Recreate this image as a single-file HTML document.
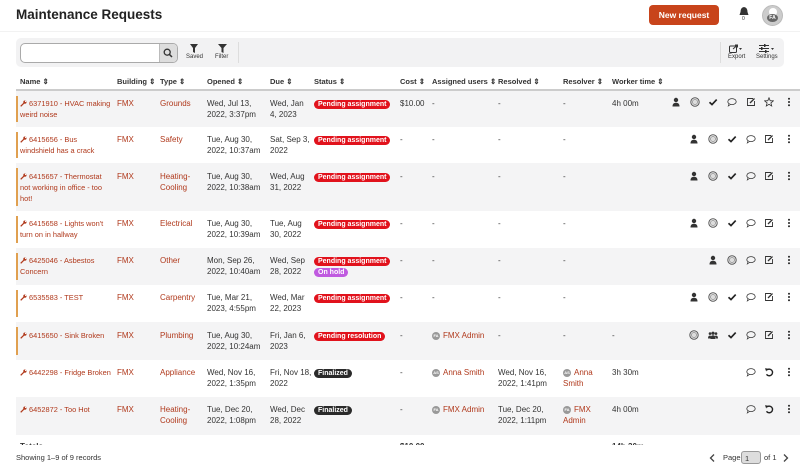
<!DOCTYPE html>
<html><head><meta charset="utf-8"><style>
*{margin:0;padding:0;box-sizing:border-box}
body{width:800px;height:468px;overflow:hidden;background:#fff;font-family:"Liberation Sans",Arial,sans-serif;color:#333;position:relative;font-size:8px}
.a{position:absolute}
.hdr{font-weight:bold;font-size:7.5px;color:#333;top:77px;position:absolute}
.row{position:absolute;left:16px;width:784px}
.g{background:#f4f4f5}
.bl::before{content:'';position:absolute;left:0;top:5px;bottom:5px;width:2px;background:#e0a050}
.c{position:absolute;line-height:11px;font-size:8px;color:#333;white-space:nowrap}
div.c[style*="left:20px"]{font-size:7.4px}
.lk{color:#b0391c}
.pill{display:inline-block;border-radius:6px;color:#fff;font-weight:bold;font-size:7px;line-height:9px;padding:0 4px;white-space:nowrap}
.red{background:#e1121c}
.blk{background:#2a2a2a}
.pur{background:#c05ae0}
.av{display:inline-block;width:8px;height:8px;border-radius:50%;background:#999;color:#fff;font-size:4px;line-height:8px;text-align:center;vertical-align:1px;margin-right:3px;font-weight:bold}
svg.i{position:absolute;width:10px;height:10px}
</style></head><body>
<svg width="0" height="0" style="position:absolute">
<defs>
<symbol id="per" viewBox="0 0 10 10"><circle cx="5" cy="3" r="2.2" fill="#333"/><path d="M1.5 9.5 Q1.5 5.8 5 5.8 Q8.5 5.8 8.5 9.5Z" fill="#333"/></symbol>
<symbol id="cir" viewBox="0 0 10 10"><circle cx="5" cy="5" r="4.2" fill="none" stroke="#555" stroke-width="1"/><circle cx="5" cy="5" r="2.6" fill="#ddd" stroke="#777" stroke-width=".6"/></symbol>
<symbol id="chk" viewBox="0 0 10 10"><path d="M1.5 5.2 L4 7.6 L8.7 2.6" fill="none" stroke="#222" stroke-width="1.7"/></symbol>
<symbol id="com" viewBox="0 0 10 10"><ellipse cx="5" cy="4.6" rx="4.2" ry="3" fill="none" stroke="#333" stroke-width=".8"/><path d="M2 7 L1.3 9 L3.6 7.4" fill="#fff" stroke="#333" stroke-width=".7"/></symbol>
<symbol id="edt" viewBox="0 0 10 10"><path d="M7 1.5 H1.5 V8.5 H8.5 V4" fill="none" stroke="#333" stroke-width=".9"/><path d="M4 6 L8.5 1.5" stroke="#333" stroke-width="1.3"/></symbol>
<symbol id="str" viewBox="0 0 10 10"><path d="M5 .8 L6.2 3.7 L9.3 3.9 L6.9 5.9 L7.7 9 L5 7.3 L2.3 9 L3.1 5.9 L.7 3.9 L3.8 3.7Z" fill="none" stroke="#333" stroke-width=".8"/></symbol>
<symbol id="dot" viewBox="0 0 10 10"><circle cx="5" cy="1.8" r="1" fill="#222"/><circle cx="5" cy="5" r="1" fill="#222"/><circle cx="5" cy="8.2" r="1" fill="#222"/></symbol>
<symbol id="grp" viewBox="0 0 10 10"><circle cx="5" cy="3.2" r="1.6" fill="#333"/><circle cx="2" cy="3.6" r="1.3" fill="#333"/><circle cx="8" cy="3.6" r="1.3" fill="#333"/><path d="M2.5 9 Q2.5 5.3 5 5.3 Q7.5 5.3 7.5 9Z M0 8.5 Q0 5.5 2 5.5 Q3 5.5 3 7 V8.5Z M10 8.5 Q10 5.5 8 5.5 Q7 5.5 7 7 V8.5Z" fill="#333"/></symbol>
<symbol id="und" viewBox="0 0 10 10"><path d="M3 3 A3.3 3.3 0 1 1 2.5 7.3" fill="none" stroke="#222" stroke-width="1.4"/><path d="M1 1.2 L3.8 1.6 L2.2 4.5Z" fill="#222"/></symbol>
<symbol id="wr" viewBox="0 0 10 10"><path d="M1 9 L5.5 4.5" stroke="#b0391c" stroke-width="1.8"/><circle cx="7" cy="3" r="2.3" fill="#b0391c"/><circle cx="8" cy="2" r="1" fill="#fff"/></symbol>
</defs></svg>

<div class="a" style="left:16px;top:7px;font-size:13.5px;font-weight:bold;color:#222">Maintenance Requests</div>
<div class="a" style="left:649px;top:5px;width:70px;height:20px;background:#c8441b;border-radius:4px;color:#fff;font-weight:bold;font-size:8.5px;line-height:20px;text-align:center">New request</div>
<svg class="a" style="left:739px;top:6px;width:10px;height:12px" viewBox="0 0 10 12"><path d="M5 1 Q8.5 1.5 8.5 6 L9.5 9 H.5 L1.5 6 Q1.5 1.5 5 1Z" fill="#333"/></svg>
<div class="a" style="left:742px;top:16px;font-size:5px">0</div>
<div class="a" style="left:762px;top:5px;width:21px;height:21px;border-radius:50%;background:#ccc;border:1px solid #bbb"><div style="position:absolute;left:6px;top:2px;width:8px;height:8px;border-radius:50%;background:#fff"></div><div style="position:absolute;left:4px;top:8px;width:11px;height:8px;border-radius:50%;background:#666;color:#fff;font-size:5px;font-weight:bold;text-align:center;line-height:8px">FA</div></div>
<div class="a" style="left:0;top:31px;width:800px;height:1px;background:#f2f2f2"></div>

<div class="a" style="left:16px;top:38px;width:768px;height:29px;background:#f2f2f3;border-radius:5px"></div>
<div class="a" style="left:20px;top:43px;width:158px;height:20px;background:#fff;border:1px solid #aaa;border-radius:5px;overflow:hidden"><div style="position:absolute;right:0;top:0;width:18px;height:20px;background:#ddd;border-left:1px solid #bbb"></div><svg style="position:absolute;right:4px;top:4px;width:10px;height:10px" viewBox="0 0 10 10"><circle cx="4.2" cy="4.2" r="3" fill="none" stroke="#333" stroke-width="1.3"/><path d="M6.3 6.3 L9 9" stroke="#333" stroke-width="1.5"/></svg></div>
<svg class="a" style="left:190px;top:44px;width:10px;height:9px" viewBox="0 0 10 9"><path d="M0 0 H8 L5 4 V9 L3 8 V4Z" fill="#333"/></svg>
<div class="a" style="left:186px;top:54px;font-size:6px">Saved</div>
<svg class="a" style="left:218px;top:44px;width:9px;height:9px" viewBox="0 0 9 9"><path d="M0 0 H9 L5.5 4 V9 L3.5 8 V4Z" fill="#333"/></svg>
<div class="a" style="left:215px;top:54px;font-size:6px">Filter</div>
<div class="a" style="left:238px;top:42px;width:1px;height:21px;background:#ddd"></div>
<div class="a" style="left:720px;top:42px;width:1px;height:21px;background:#ddd"></div>
<svg class="a" style="left:729px;top:44px;width:14px;height:9px" viewBox="0 0 14 9"><rect x=".5" y="2" width="7" height="6.5" rx="1" fill="none" stroke="#333"/><path d="M4 5 L8 1.5 M6 1 H8.5 V3.5" stroke="#333" fill="none"/><path d="M10 4 L13 4 L11.5 6Z" fill="#333"/></svg>
<div class="a" style="left:728px;top:54px;font-size:6px">Export</div>
<svg class="a" style="left:759px;top:44px;width:16px;height:9px" viewBox="0 0 16 9"><path d="M0 1.5 H10 M0 4.5 H10 M0 7.5 H10" stroke="#333"/><rect x="5" y="0" width="1.5" height="3" fill="#333"/><rect x="2" y="3" width="1.5" height="3" fill="#333"/><rect x="6" y="6" width="1.5" height="3" fill="#333"/><path d="M12 4 L15 4 L13.5 6Z" fill="#333"/></svg>
<div class="a" style="left:756px;top:54px;font-size:6px">Settings</div>

<div class="hdr" style="left:20px">Name ⇕</div>
<div class="hdr" style="left:117px">Building ⇕</div>
<div class="hdr" style="left:160px">Type ⇕</div>
<div class="hdr" style="left:207px">Opened ⇕</div>
<div class="hdr" style="left:270px">Due ⇕</div>
<div class="hdr" style="left:314px">Status ⇕</div>
<div class="hdr" style="left:400px">Cost ⇕</div>
<div class="hdr" style="left:432px">Assigned users ⇕</div>
<div class="hdr" style="left:498px">Resolved ⇕</div>
<div class="hdr" style="left:563px">Resolver ⇕</div>
<div class="hdr" style="left:612px">Worker time ⇕</div>
<div class="a" style="left:16px;top:89px;width:784px;height:2px;background:#ccc"></div>

<div class="row g bl" style="top:91px;height:36px"></div>
<div class="row bl" style="top:127px;height:36px"></div>
<div class="row g bl" style="top:163px;height:48px"></div>
<div class="row bl" style="top:211px;height:37px"></div>
<div class="row g bl" style="top:248px;height:37px"></div>
<div class="row bl" style="top:285px;height:37px"></div>
<div class="row g bl" style="top:322px;height:38px"></div>
<div class="row" style="top:360px;height:37px"></div>
<div class="row g" style="top:397px;height:38px"></div>

<div class="c lk" style="left:20px;top:98px"><svg style="width:7px;height:7px;vertical-align:-1px"><use href="#wr"/></svg> 6371910 - HVAC making<br>weird noise</div>
<div class="c lk" style="left:117px;top:98px">FMX</div>
<div class="c lk" style="left:160px;top:98px">Grounds</div>
<div class="c" style="left:207px;top:98px">Wed, Jul 13,<br>2022, 3:37pm</div>
<div class="c" style="left:270px;top:98px">Wed, Jan<br>4, 2023</div>
<div class="c" style="left:314px;top:98px"><span class="pill red">Pending assignment</span></div>
<div class="c" style="left:400px;top:98px">$10.00</div>
<div class="c" style="left:432px;top:98px">-</div>
<div class="c" style="left:498px;top:98px">-</div>
<div class="c" style="left:563px;top:98px">-</div>
<div class="c" style="left:612px;top:98px">4h 00m</div>

<div class="c lk" style="left:20px;top:134px"><svg style="width:7px;height:7px;vertical-align:-1px"><use href="#wr"/></svg> 6415656 - Bus<br>windshield has a crack</div>
<div class="c lk" style="left:117px;top:134px">FMX</div>
<div class="c lk" style="left:160px;top:134px">Safety</div>
<div class="c" style="left:207px;top:134px">Tue, Aug 30,<br>2022, 10:37am</div>
<div class="c" style="left:270px;top:134px">Sat, Sep 3,<br>2022</div>
<div class="c" style="left:314px;top:134px"><span class="pill red">Pending assignment</span></div>
<div class="c" style="left:400px;top:134px">-</div><div class="c" style="left:432px;top:134px">-</div><div class="c" style="left:498px;top:134px">-</div><div class="c" style="left:563px;top:134px">-</div>

<div class="c lk" style="left:20px;top:171px"><svg style="width:7px;height:7px;vertical-align:-1px"><use href="#wr"/></svg> 6415657 - Thermostat<br>not working in office - too<br>hot!</div>
<div class="c lk" style="left:117px;top:171px">FMX</div>
<div class="c lk" style="left:160px;top:171px">Heating-<br>Cooling</div>
<div class="c" style="left:207px;top:171px">Tue, Aug 30,<br>2022, 10:38am</div>
<div class="c" style="left:270px;top:171px">Wed, Aug<br>31, 2022</div>
<div class="c" style="left:314px;top:171px"><span class="pill red">Pending assignment</span></div>
<div class="c" style="left:400px;top:171px">-</div><div class="c" style="left:432px;top:171px">-</div><div class="c" style="left:498px;top:171px">-</div><div class="c" style="left:563px;top:171px">-</div>

<div class="c lk" style="left:20px;top:218px"><svg style="width:7px;height:7px;vertical-align:-1px"><use href="#wr"/></svg> 6415658 - Lights won't<br>turn on in hallway</div>
<div class="c lk" style="left:117px;top:218px">FMX</div>
<div class="c lk" style="left:160px;top:218px">Electrical</div>
<div class="c" style="left:207px;top:218px">Tue, Aug 30,<br>2022, 10:39am</div>
<div class="c" style="left:270px;top:218px">Tue, Aug<br>30, 2022</div>
<div class="c" style="left:314px;top:218px"><span class="pill red">Pending assignment</span></div>
<div class="c" style="left:400px;top:218px">-</div><div class="c" style="left:432px;top:218px">-</div><div class="c" style="left:498px;top:218px">-</div><div class="c" style="left:563px;top:218px">-</div>

<div class="c lk" style="left:20px;top:255px"><svg style="width:7px;height:7px;vertical-align:-1px"><use href="#wr"/></svg> 6425046 - Asbestos<br>Concern</div>
<div class="c lk" style="left:117px;top:255px">FMX</div>
<div class="c lk" style="left:160px;top:255px">Other</div>
<div class="c" style="left:207px;top:255px">Mon, Sep 26,<br>2022, 10:40am</div>
<div class="c" style="left:270px;top:255px">Wed, Sep<br>28, 2022</div>
<div class="c" style="left:314px;top:255px"><span class="pill red">Pending assignment</span><br><span class="pill pur" style="margin-top:1px">On hold</span></div>
<div class="c" style="left:400px;top:255px">-</div><div class="c" style="left:432px;top:255px">-</div><div class="c" style="left:498px;top:255px">-</div><div class="c" style="left:563px;top:255px">-</div>

<div class="c lk" style="left:20px;top:292px"><svg style="width:7px;height:7px;vertical-align:-1px"><use href="#wr"/></svg> 6535583 - TEST</div>
<div class="c lk" style="left:117px;top:292px">FMX</div>
<div class="c lk" style="left:160px;top:292px">Carpentry</div>
<div class="c" style="left:207px;top:292px">Tue, Mar 21,<br>2023, 4:55pm</div>
<div class="c" style="left:270px;top:292px">Wed, Mar<br>22, 2023</div>
<div class="c" style="left:314px;top:292px"><span class="pill red">Pending assignment</span></div>
<div class="c" style="left:400px;top:292px">-</div><div class="c" style="left:432px;top:292px">-</div><div class="c" style="left:498px;top:292px">-</div><div class="c" style="left:563px;top:292px">-</div>

<div class="c lk" style="left:20px;top:330px"><svg style="width:7px;height:7px;vertical-align:-1px"><use href="#wr"/></svg> 6415650 - Sink Broken</div>
<div class="c lk" style="left:117px;top:330px">FMX</div>
<div class="c lk" style="left:160px;top:330px">Plumbing</div>
<div class="c" style="left:207px;top:330px">Tue, Aug 30,<br>2022, 10:24am</div>
<div class="c" style="left:270px;top:330px">Fri, Jan 6,<br>2023</div>
<div class="c" style="left:314px;top:330px"><span class="pill red">Pending resolution</span></div>
<div class="c" style="left:400px;top:330px">-</div>
<div class="c lk" style="left:432px;top:330px"><span class="av">FA</span>FMX Admin</div>
<div class="c" style="left:498px;top:330px">-</div><div class="c" style="left:563px;top:330px">-</div><div class="c" style="left:612px;top:330px">-</div>

<div class="c lk" style="left:20px;top:367px"><svg style="width:7px;height:7px;vertical-align:-1px"><use href="#wr"/></svg> 6442298 - Fridge Broken</div>
<div class="c lk" style="left:117px;top:367px">FMX</div>
<div class="c lk" style="left:160px;top:367px">Appliance</div>
<div class="c" style="left:207px;top:367px">Wed, Nov 16,<br>2022, 1:35pm</div>
<div class="c" style="left:270px;top:367px">Fri, Nov 18,<br>2022</div>
<div class="c" style="left:314px;top:367px"><span class="pill blk">Finalized</span></div>
<div class="c" style="left:400px;top:367px">-</div>
<div class="c lk" style="left:432px;top:367px"><span class="av">AS</span>Anna Smith</div>
<div class="c" style="left:498px;top:367px">Wed, Nov 16,<br>2022, 1:41pm</div>
<div class="c lk" style="left:563px;top:367px"><span class="av">AS</span>Anna<br>Smith</div>
<div class="c" style="left:612px;top:367px">3h 30m</div>

<div class="c lk" style="left:20px;top:404px"><svg style="width:7px;height:7px;vertical-align:-1px"><use href="#wr"/></svg> 6452872 - Too Hot</div>
<div class="c lk" style="left:117px;top:404px">FMX</div>
<div class="c lk" style="left:160px;top:404px">Heating-<br>Cooling</div>
<div class="c" style="left:207px;top:404px">Tue, Dec 20,<br>2022, 1:08pm</div>
<div class="c" style="left:270px;top:404px">Wed, Dec<br>28, 2022</div>
<div class="c" style="left:314px;top:404px"><span class="pill blk">Finalized</span></div>
<div class="c" style="left:400px;top:404px">-</div>
<div class="c lk" style="left:432px;top:404px"><span class="av">FA</span>FMX Admin</div>
<div class="c" style="left:498px;top:404px">Tue, Dec 20,<br>2022, 1:11pm</div>
<div class="c lk" style="left:563px;top:404px"><span class="av">FA</span>FMX<br>Admin</div>
<div class="c" style="left:612px;top:404px">4h 00m</div>

<svg class="i" style="left:671px;top:97px"><use href="#per"/></svg><svg class="i" style="left:690px;top:97px"><use href="#cir"/></svg><svg class="i" style="left:708px;top:97px"><use href="#chk"/></svg><svg class="i" style="left:727px;top:97px"><use href="#com"/></svg><svg class="i" style="left:746px;top:97px"><use href="#edt"/></svg><svg class="i" style="left:764px;top:97px"><use href="#str"/></svg><svg class="i" style="left:784px;top:97px"><use href="#dot"/></svg>

<svg class="i" style="left:689px;top:134px"><use href="#per"/></svg><svg class="i" style="left:708px;top:134px"><use href="#cir"/></svg><svg class="i" style="left:727px;top:134px"><use href="#chk"/></svg><svg class="i" style="left:746px;top:134px"><use href="#com"/></svg><svg class="i" style="left:764px;top:134px"><use href="#edt"/></svg><svg class="i" style="left:784px;top:134px"><use href="#dot"/></svg>

<svg class="i" style="left:689px;top:171px"><use href="#per"/></svg><svg class="i" style="left:708px;top:171px"><use href="#cir"/></svg><svg class="i" style="left:727px;top:171px"><use href="#chk"/></svg><svg class="i" style="left:746px;top:171px"><use href="#com"/></svg><svg class="i" style="left:764px;top:171px"><use href="#edt"/></svg><svg class="i" style="left:784px;top:171px"><use href="#dot"/></svg>

<svg class="i" style="left:689px;top:218px"><use href="#per"/></svg><svg class="i" style="left:708px;top:218px"><use href="#cir"/></svg><svg class="i" style="left:727px;top:218px"><use href="#chk"/></svg><svg class="i" style="left:746px;top:218px"><use href="#com"/></svg><svg class="i" style="left:764px;top:218px"><use href="#edt"/></svg><svg class="i" style="left:784px;top:218px"><use href="#dot"/></svg>

<svg class="i" style="left:708px;top:255px"><use href="#per"/></svg><svg class="i" style="left:727px;top:255px"><use href="#cir"/></svg><svg class="i" style="left:746px;top:255px"><use href="#com"/></svg><svg class="i" style="left:764px;top:255px"><use href="#edt"/></svg><svg class="i" style="left:784px;top:255px"><use href="#dot"/></svg>

<svg class="i" style="left:689px;top:292px"><use href="#per"/></svg><svg class="i" style="left:708px;top:292px"><use href="#cir"/></svg><svg class="i" style="left:727px;top:292px"><use href="#chk"/></svg><svg class="i" style="left:746px;top:292px"><use href="#com"/></svg><svg class="i" style="left:764px;top:292px"><use href="#edt"/></svg><svg class="i" style="left:784px;top:292px"><use href="#dot"/></svg>

<svg class="i" style="left:689px;top:330px"><use href="#cir"/></svg><svg class="i" style="left:708px;top:330px"><use href="#grp"/></svg><svg class="i" style="left:727px;top:330px"><use href="#chk"/></svg><svg class="i" style="left:746px;top:330px"><use href="#com"/></svg><svg class="i" style="left:764px;top:330px"><use href="#edt"/></svg><svg class="i" style="left:784px;top:330px"><use href="#dot"/></svg>

<svg class="i" style="left:746px;top:367px"><use href="#com"/></svg><svg class="i" style="left:764px;top:367px"><use href="#und"/></svg><svg class="i" style="left:784px;top:367px"><use href="#dot"/></svg>
<svg class="i" style="left:746px;top:404px"><use href="#com"/></svg><svg class="i" style="left:764px;top:404px"><use href="#und"/></svg><svg class="i" style="left:784px;top:404px"><use href="#dot"/></svg>

<div class="a" style="left:20px;top:441px;height:4px;overflow:hidden;font-size:8px;font-weight:bold;line-height:11px">Totals</div>
<div class="a" style="left:400px;top:441px;height:4px;overflow:hidden;font-size:8px;font-weight:bold;line-height:11px">$10.00</div>
<div class="a" style="left:612px;top:441px;height:4px;overflow:hidden;font-size:8px;font-weight:bold;line-height:11px">14h 30m</div>

<div class="a" style="left:16px;top:453px;font-size:7.5px;color:#333">Showing 1–9 of 9 records</div>
<svg class="a" style="left:709px;top:454px;width:6px;height:8px" viewBox="0 0 6 8"><path d="M5 0.5 L1.5 4 L5 7.5" fill="none" stroke="#444" stroke-width="1.3"/></svg>
<div class="a" style="left:723px;top:453px;font-size:7.5px">Page</div>
<div class="a" style="left:741px;top:451px;width:20px;height:13px;background:#ddd;border:1px solid #999;border-radius:3px;font-size:7.5px;padding:2px 3px">1</div>
<div class="a" style="left:764px;top:453px;font-size:7.5px">of 1</div>
<svg class="a" style="left:783px;top:454px;width:6px;height:8px" viewBox="0 0 6 8"><path d="M1 0.5 L4.5 4 L1 7.5" fill="none" stroke="#444" stroke-width="1.3"/></svg>
</body></html>
